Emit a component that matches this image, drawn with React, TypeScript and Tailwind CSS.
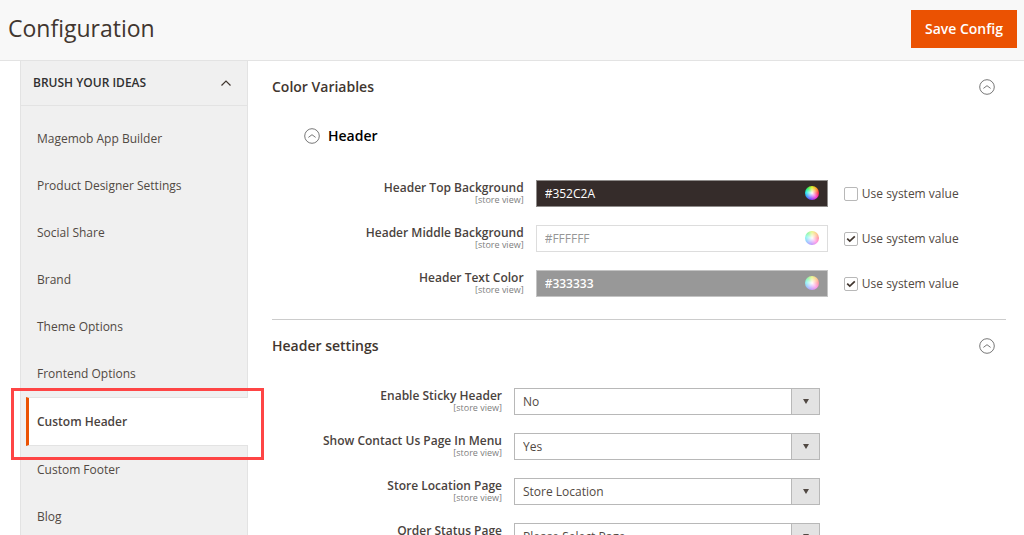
import { useId, useState } from "react"
import type { ReactNode } from "react"

const navItems = [
  "Magemob App Builder",
  "Product Designer Settings",
  "Social Share",
  "Brand",
  "Theme Options",
  "Frontend Options",
  "Custom Header",
  "Custom Footer",
  "Blog",
]

const activeItem = "Custom Header"

type ColorField = {
  label: string
  value: string
  boxClass: string
  inherit: boolean
}

const colorFields: ColorField[] = [
  {
    label: "Header Top Background",
    value: "#352C2A",
    boxClass: "border-[#8f8c8a] bg-[#352c2a] font-medium text-white",
    inherit: false,
  },
  {
    label: "Header Middle Background",
    value: "#FFFFFF",
    boxClass: "border-[#bdbdbd] bg-white text-[#303030]",
    inherit: true,
  },
  {
    label: "Header Text Color",
    value: "#333333",
    boxClass: "border-[#8a8a8a] bg-[#333333] font-semibold text-white",
    inherit: true,
  },
]

const selectFields = [
  { label: "Enable Sticky Header", options: ["No", "Yes"] },
  { label: "Show Contact Us Page In Menu", options: ["Yes", "No"] },
  { label: "Store Location Page", options: ["Store Location"] },
  { label: "Order Status Page", options: ["Please Select Page"] },
]

function CircleChevron() {
  return (
    <svg viewBox="0 0 16 16" className="size-4 shrink-0" fill="none" aria-hidden="true">
      <circle cx="8" cy="8" r="7.3" stroke="#777" />
      <path d="M4.4 9.4 8 6.7l3.6 2.7" stroke="#777" />
    </svg>
  )
}

function FieldRow({ id, label, children }: { id: string; label: string; children: ReactNode }) {
  return (
    <div className="grid grid-cols-[230fr_306fr_174fr] items-start gap-x-3">
      <label htmlFor={id} className="flex flex-col items-end pt-px whitespace-nowrap">
        <span className="text-xs leading-[14px] font-semibold text-[#4a433e]">{label}</span>
        <span className="text-[9px] leading-[10px] text-[#808080]">[store view]</span>
      </label>
      {children}
    </div>
  )
}

function ColorRow({ field }: { field: ColorField }) {
  const id = useId()
  const [inherit, setInherit] = useState(field.inherit)

  return (
    <FieldRow id={id} label={field.label}>
      <div className={inherit ? "relative opacity-50" : "relative"}>
        <input
          id={id}
          type="text"
          defaultValue={field.value}
          disabled={inherit}
          className={["block h-[27px] w-full border px-2 text-xs", field.boxClass].join(" ")}
        />
        <span className="absolute top-1.5 right-[9px] size-3.5 rounded-full bg-[radial-gradient(circle,#fff_0%,#ffffff00_65%),conic-gradient(#d8f020,#ff9a20_45deg,#ff3048_90deg,#ff30d0_135deg,#7a40ff_190deg,#30a0ff_240deg,#20f0e0_280deg,#30f050_320deg,#d8f020)]" />
      </div>
      <label className="flex h-[27px] items-center gap-1 pl-1 text-xs whitespace-nowrap text-[#514943]">
        <span className="relative mt-px size-3.5 shrink-0">
          <input
            type="checkbox"
            checked={inherit}
            onChange={(e) => setInherit(e.target.checked)}
            className="peer block size-3.5 appearance-none rounded-[2px] border border-[#b8b8b8] bg-white"
          />
          <svg
            viewBox="0 0 14 14"
            fill="none"
            className="pointer-events-none absolute inset-0 hidden size-3.5 peer-checked:block"
          >
            <path d="m3.2 6.6 2.6 2.5 5-4.8" stroke="#41362f" strokeWidth="1.7" />
          </svg>
        </span>
        Use system value
      </label>
    </FieldRow>
  )
}

function SelectRow({ label, options }: { label: string; options: string[] }) {
  const id = useId()

  return (
    <FieldRow id={id} label={label}>
      <div className="relative">
        <select
          id={id}
          className="block h-[27px] w-full appearance-none border border-[#b8b8b8] bg-white pr-8 pl-2 text-xs text-[#514943]"
        >
          {options.map((o) => (
            <option key={o}>{o}</option>
          ))}
        </select>
        <span className="pointer-events-none absolute inset-y-0 right-0 grid w-[29px] place-items-center border border-[#b8b8b8] bg-[#e3e3e3]">
          <svg viewBox="0 0 6 5" className="h-[5px] w-1.5" aria-hidden="true">
            <path d="M0 0h6L3 5z" fill="#514943" />
          </svg>
        </span>
      </div>
    </FieldRow>
  )
}

function SectionHead({ title }: { title: string }) {
  return (
    <div className="flex h-[52px] items-center justify-between pr-[11px]">
      <h2 className="text-sm font-semibold text-[#41362f]">{title}</h2>
      <button type="button" aria-label={`Collapse ${title}`}>
        <CircleChevron />
      </button>
    </div>
  )
}

function Sidebar() {
  return (
    <aside className="w-[228px] shrink-0 border-x border-[#e3e3e3] bg-[#f0f0f0]">
      <button
        type="button"
        className="flex h-[45px] w-full items-center justify-between border-b border-[#e3e3e3] pr-[15px] pl-3 text-xs font-semibold text-[#303030]"
      >
        BRUSH YOUR IDEAS
        <svg viewBox="0 0 12 8" className="h-2 w-3" fill="none" aria-hidden="true">
          <path d="M1.5 6.5 6 2l4.5 4.5" stroke="#41362f" strokeWidth="1.2" />
        </svg>
      </button>
      <ul className="pt-[9px]">
        {navItems.map((item) =>
          item === activeItem ? (
            <li key={item} className="relative -mr-px pl-[5px]">
              <a
                href="#"
                aria-current="page"
                className="flex h-[49px] items-center border-y border-l-3 border-y-[#e3e3e3] border-l-[#eb5202] bg-white pl-2 text-xs font-semibold text-[#4a433e]"
              >
                {item}
              </a>
              <span className="pointer-events-none absolute -top-[9px] -right-4 -bottom-[14px] -left-[10px] border-3 border-[#fe4545]" />
            </li>
          ) : (
            <li key={item}>
              <a href="#" className="flex h-[47px] items-center pl-4 text-xs text-[#514943]">
                {item}
              </a>
            </li>
          ),
        )}
      </ul>
    </aside>
  )
}

export default function App() {
  return (
    <div className="flex h-screen flex-col overflow-hidden bg-white font-['Open_Sans',sans-serif]">
      <header className="flex shrink-0 items-start justify-between border-b border-[#e3e3e3] bg-[#f8f8f8] pt-[10px] pr-[7px] pb-3 pl-2">
        <h1 className="text-[23px] leading-9 text-[#41362f]">Configuration</h1>
        <button
          type="button"
          className="h-[38px] bg-[#eb5202] px-[14px] text-sm font-semibold text-white"
        >
          Save Config
        </button>
      </header>

      <div className="flex min-h-0 flex-1 pl-5">
        <Sidebar />
        <main className="min-w-0 flex-1 pr-[18px] pl-6">
          <section className="border-b border-[#cccccc] pb-[22px]">
            <SectionHead title="Color Variables" />
            <div className="pl-8">
              <h3 className="flex h-[46px] items-center text-sm font-semibold text-black">
                <button type="button" className="flex items-center gap-2">
                  <CircleChevron />
                  Header
                </button>
              </h3>
              <div className="flex flex-col gap-[18px] pt-[21px]">
                {colorFields.map((f) => (
                  <ColorRow key={f.label} field={f} />
                ))}
              </div>
            </div>
          </section>

          <section>
            <SectionHead title="Header settings" />
            <div className="flex flex-col gap-[18px] pt-4">
              {selectFields.map((f) => (
                <SelectRow key={f.label} label={f.label} options={f.options} />
              ))}
            </div>
          </section>
        </main>
      </div>
    </div>
  )
}
